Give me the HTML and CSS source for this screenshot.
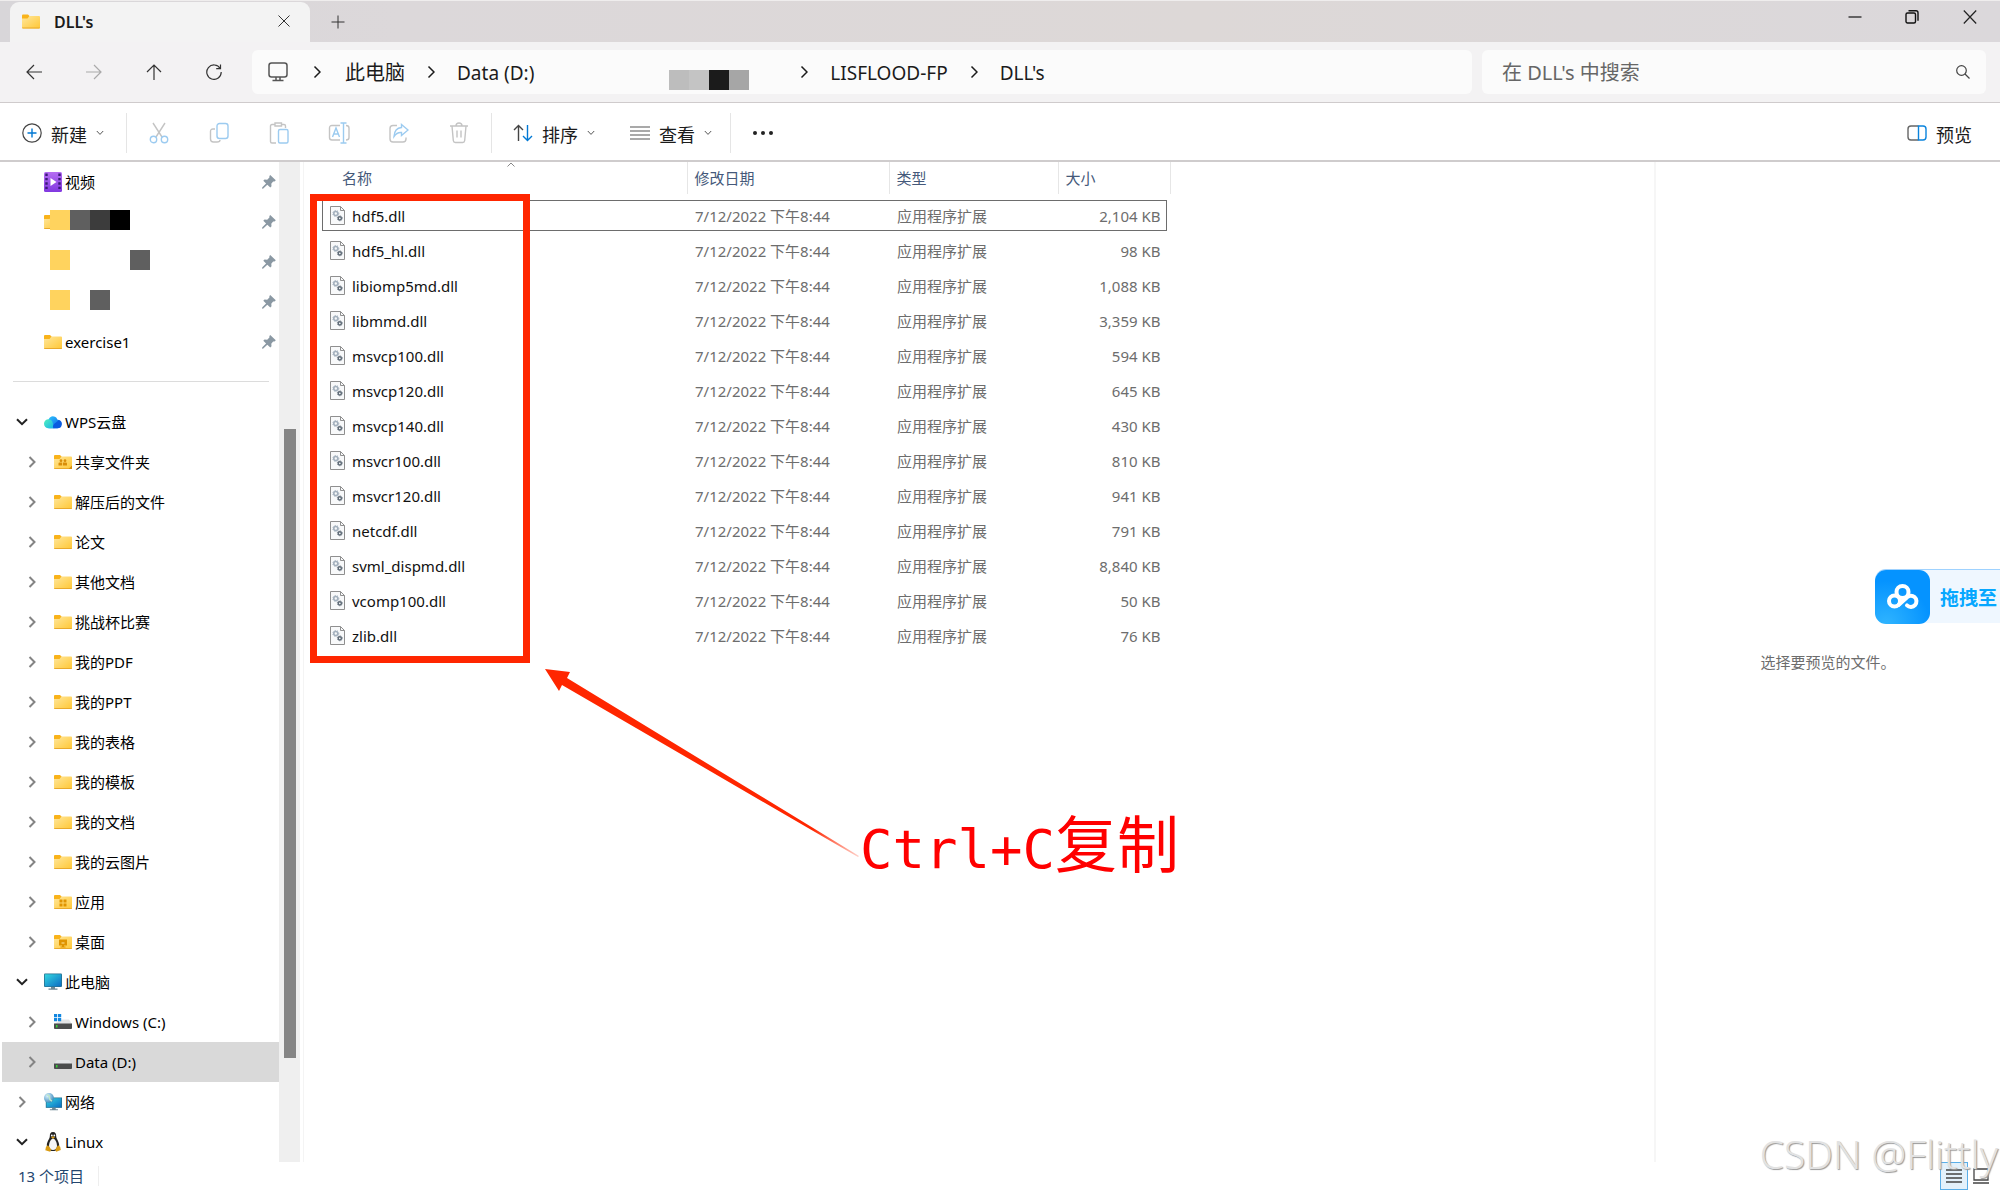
FILE: index.html
```html
<!DOCTYPE html>
<html lang="zh-CN">
<head>
<meta charset="utf-8">
<title>DLL's</title>
<link rel="stylesheet" href="styles.css">
</head>
<body>
<svg class="defs" aria-hidden="true">
  <defs>
    <linearGradient id="g-folder" x1="0" y1="0" x2="1" y2="1"><stop offset="0" stop-color="#ffe79c"/><stop offset="1" stop-color="#ffc735"/></linearGradient>
    <linearGradient id="g-screen" x1="0" y1="0" x2="1" y2="1"><stop offset="0" stop-color="#34d6e0"/><stop offset="1" stop-color="#0b6cc4"/></linearGradient>
    <linearGradient id="g-video" x1="0" y1="0" x2="0" y2="1"><stop offset="0" stop-color="#b56df2"/><stop offset="1" stop-color="#8138e0"/></linearGradient>
    <linearGradient id="g-cloud" x1="0" y1="0" x2="1" y2="1"><stop offset="0" stop-color="#2ec4ff"/><stop offset="1" stop-color="#0a5be0"/></linearGradient>
    <linearGradient id="g-mint" x1="0" y1="0" x2="1" y2="1"><stop offset="0" stop-color="#4ff0bd"/><stop offset="1" stop-color="#18b4ea"/></linearGradient>
    <radialGradient id="g-globe" cx=".35" cy=".3" r=".8"><stop offset="0" stop-color="#d8f2ff"/><stop offset="1" stop-color="#2d7fb4"/></radialGradient>
    <linearGradient id="g-arrow" gradientUnits="userSpaceOnUse" x1="0" y1="0" x2="314" y2="188"><stop offset=".85" stop-color="#ff2600"/><stop offset="1" stop-color="#ff2600" stop-opacity=".2"/></linearGradient>
  </defs>
  <symbol id="folder" viewBox="0 0 18 15"><path d="M0 1.5Q0 .5 1 .5h5l1.500 1.500V5H0z" fill="#f9b31a"/><path d="M0 4.500h5.500L7.500 2H17q1 0 1 1v10.500q0 1-1 1H1q-1 0-1-1z" fill="url(#g-folder)"/><path d="M0 13.500h18q0 1-1 1H1q-1 0-1-1z" fill="#e9a92c"/></symbol>
  <symbol id="folder-share" viewBox="0 0 18 15"><use href="#folder"/><g fill="#d98e0a"><circle cx="7" cy="6.200" r="1.400"/><circle cx="11" cy="6.200" r="1.400"/><path d="M4.500 11V9q0-1 1-1h2.700v3zM9 11V8h3q1 0 1 1v2zM18 11v3.500h-3.500z"/></g></symbol>
  <symbol id="folder-apps" viewBox="0 0 18 15"><use href="#folder"/><path d="M5.500 5h3v3h-3zM9.500 5h3v3h-3zM5.500 9h3v3h-3zM9.500 9h3v3h-3z" fill="#e09400"/></symbol>
  <symbol id="folder-desk" viewBox="0 0 18 15"><use href="#folder"/><path d="M5 5h8v6h-3v1h1.500v1h-5v-1H8v-1H5z" fill="#e09400"/><path d="M7.500 8.500h3" stroke="#ffe79c"/></symbol>
  <symbol id="video" viewBox="0 0 18 20"><rect width="18" height="20" rx="1.500" fill="url(#g-video)"/><path d="M2.500 1.500v17M15.500 1.500v17" stroke="#3b1a78" stroke-width="2.400" stroke-dasharray="2.400 2"/><path d="M6.500 6l6 4-6 4z" fill="#fff"/></symbol>
  <symbol id="cloud" viewBox="0 0 20 15"><path d="M5 8a5 5 0 0 1 9.800-3.200A5 5 0 0 1 15 14.500H5z" fill="url(#g-cloud)"/><path d="M5 4.500a5 5 0 0 1 4 2l2.500 8H5a5 5 0 0 1 0-10z" fill="url(#g-mint)"/><path d="M10.500 14.500q-1.500-3 1-5t5-4.200a4.700 4.700 0 0 1-1.500 9.200z" fill="#0a5be0"/></symbol>
  <symbol id="pc" viewBox="0 0 18 17"><rect width="18" height="13.500" rx="1" fill="#27708f"/><rect x=".8" y=".8" width="16.400" height="12" fill="url(#g-screen)"/><path d="M7 13.500h4V15H7zM4.500 15h9v1.200h-9z" fill="#6d8794"/></symbol>
  <symbol id="drive" viewBox="0 0 18 16"><path d="M3 6h12l3 4H0z" fill="#e3e5e7"/><path d="M0 9.500h18v4.700q0 .8-1 .8H1q-1 0-1-.8z" fill="#4b4d4e"/><rect x="2" y="11" width="1.500" height="2.500" fill="#36d236"/></symbol>
  <symbol id="drive-win" viewBox="0 0 18 16"><path d="M8 5.500h7l3 4.500H0z" fill="#e3e5e7"/><path d="M0 9.500h18v4.700q0 .8-1 .8H1q-1 0-1-.8z" fill="#4b4d4e"/><rect x="2" y="11" width="1.500" height="2.500" fill="#36d236"/><path d="M0 0h3.200v3.200H0zM4 0h3.200v3.200H4zM0 4h3.200v3.200H0zM4 4h3.200v3.200H4z" fill="#1287e0"/></symbol>
  <symbol id="network" viewBox="0 0 20 20"><path d="M2 5h18v11.500H2z" fill="#27708f"/><path d="M2.800 5.800h16.400v10H2.800z" fill="url(#g-screen)"/><path d="M9 16.500h4V18H9zM6.500 18h9v1.200h-9z" fill="#6d8794"/><circle cx="5.500" cy="5.500" r="5.500" fill="url(#g-globe)"/><path d="M3 2q3 0 3 3t3 4" stroke="#bfe6c8" stroke-width="1.500" fill="none"/></symbol>
  <symbol id="tux" viewBox="0 0 16 20"><path d="M8 0c2.500 0 3.200 2 3.200 4.200 0 2.800 3 5 3 9.300 0 3.500-3 5.500-6.200 5.500s-6.200-2-6.200-5.500c0-4.300 3-6.500 3-9.300C4.800 2 5.500 0 8 0z" fill="#222"/><path d="M8 6.500c2 0 4 4 4 7.500 0 2.500-2 4-4 4s-4-1.500-4-4c0-3.500 2-7.500 4-7.500z" fill="#f5f5f5"/><circle cx="6.800" cy="3.500" r=".9" fill="#fff"/><circle cx="9.300" cy="3.500" r=".9" fill="#fff"/><path d="M6 5.200l2-1 2 1-2 1.600zM3 13.200l3.200 4.300-1 2.200-4.900-1.500.7-3.500zM13 13.200l2.200 1.500.6 3.200-4.600 1.800-1-2z" fill="#d99b13"/></symbol>
  <symbol id="pin" viewBox="0 0 14 14"><path d="M8.200 0l5.600 5.200-1.300 1.200h-1.400L9.300 8.700l.2 2.600-1.200 1.100-3-2.700L1 13.800l-1-.3.300-1.200 3.800-3.700L1.300 5.800l1.200-1.200 2.700.2 2.200-2.200V.9z" fill="#8a98a3"/></symbol>
  <symbol id="right" viewBox="0 0 8 12"><path d="M1.500 1l5 5-5 5" fill="none" stroke="currentColor" stroke-width="2"/></symbol>
  <symbol id="down" viewBox="0 0 12 8"><path d="M1 1.200l5 5 5-5" fill="none" stroke="currentColor" stroke-width="2"/></symbol>
  <symbol id="crumb" viewBox="0 0 8 14"><path d="M1.500 1.500L7 7l-5.500 5.500" fill="none" stroke="currentColor" stroke-width="1.500"/></symbol>
  <symbol id="caret" viewBox="0 0 8 6"><path d="M.8 1L4 4.400 7.200 1" fill="none" stroke="currentColor"/></symbol>
  <symbol id="dll" viewBox="0 0 15 19"><path d="M.5.500h10l4 4v14H.5z" fill="#f8f9fa" stroke="#8f8f8f"/><path d="M10.500.500v4h4" fill="none" stroke="#8f8f8f"/><circle cx="5.800" cy="7.500" r="2" fill="none" stroke="#a3b0bd" stroke-width="1.600"/><circle cx="5.800" cy="7.500" r="3" fill="none" stroke="#a3b0bd" stroke-dasharray="1.200 1.300"/><circle cx="9.800" cy="12.300" r="1.600" fill="none" stroke="#5f6b77" stroke-width="1.500"/><circle cx="9.800" cy="12.300" r="2.500" fill="none" stroke="#5f6b77" stroke-width=".8" stroke-dasharray="1 1"/></symbol>
</svg>

<header class="titlebar">
  <div class="tab">
    <svg class="tab-icon"><use href="#folder"/></svg>
    <span class="tab-title">DLL's</span>
    <button class="tab-close" aria-label="关闭标签页"><svg width="12" height="12" viewBox="0 0 12 12"><path d="M.5.500l11 11M11.500.500l-11 11" stroke="#333"/></svg></button>
  </div>
  <button class="tab-add" aria-label="新建标签页"><svg width="14" height="14" viewBox="0 0 14 14"><path d="M7 .5v13M.5 7h13" stroke="#333"/></svg></button>
  <div class="window-buttons">
    <button aria-label="最小化"><svg width="14" height="14" viewBox="0 0 14 14"><path d="M.5 7h13" stroke="#222" stroke-width="1.300"/></svg></button>
    <button aria-label="还原"><svg width="14" height="14" viewBox="0 0 14 14" fill="none" stroke="#111" stroke-width="1.400"><rect x="1" y="3" width="9.500" height="10" rx="1.500"/><path d="M3.500.800H11q2 0 2 2v8"/></svg></button>
    <button aria-label="关闭"><svg width="14" height="14" viewBox="0 0 14 14"><path d="M.8.500l12.400 13M13.200.500L.8 13.500" stroke="#222" stroke-width="1.200"/></svg></button>
  </div>
</header>

<div class="navbar">
  <div class="nav-buttons">
    <button aria-label="后退"><svg width="16" height="16" viewBox="0 0 16 16"><path d="M16 8H1M8 1L1 8l7 7"/></svg></button>
    <button aria-label="前进" disabled><svg width="16" height="16" viewBox="0 0 16 16"><path d="M0 8h15M8 1l7 7-7 7"/></svg></button>
    <button aria-label="向上"><svg width="16" height="16" viewBox="0 0 16 16"><path d="M8 16V1M1 8l7-7 7 7"/></svg></button>
    <button aria-label="刷新"><svg width="16" height="16" viewBox="0 0 16 16"><path d="M14.200 4.500A7.200 7.200 0 1 0 15.200 8M14.500.500v4.200h-4.300"/></svg></button>
  </div>
  <nav class="address" aria-label="地址">
    <svg class="monitor" viewBox="0 0 20 20" fill="none" stroke="#555" stroke-width="1.500"><rect x="1" y="1" width="18" height="14" rx="2.500"/><path d="M8 15v3M12 15v3M4.500 18.500h11"/></svg>
    <svg class="crumb"><use href="#crumb"/></svg>
    <a class="cn" href="#">此电脑</a>
    <svg class="crumb"><use href="#crumb"/></svg>
    <a href="#">Data (D:)</a>
    <div class="mosaic"><i class="m1"></i><i class="m2"></i><i class="m3"></i><i class="m4"></i></div>
    <svg class="crumb"><use href="#crumb"/></svg>
    <a href="#">LISFLOOD-FP</a>
    <svg class="crumb"><use href="#crumb"/></svg>
    <a href="#">DLL's</a>
  </nav>
  <label class="search">
    <input type="text" placeholder="在 DLL's 中搜索" aria-label="搜索">
    <svg width="14" height="14" viewBox="0 0 14 14" fill="none" stroke="#444" stroke-width="1.200"><circle cx="5.500" cy="5.500" r="4.800"/><path d="M9 9l4.500 4.500"/></svg>
  </label>
</div>

<div class="toolbar">
  <button class="cmd cmd-new"><svg width="20" height="20" viewBox="0 0 20 20" fill="none"><circle cx="10" cy="10" r="9.200" stroke="#444" stroke-width="1.200"/><path d="M10 5.500v9M5.500 10h9" stroke="#0078d4" stroke-width="1.400"/></svg><span>新建</span><svg class="caret"><use href="#caret"/></svg></button>
  <span class="sep"></span>
  <button class="icon-btn" aria-label="剪切"><svg width="20" height="22" viewBox="0 0 20 22" fill="none" stroke-width="1.400"><path d="M4 1l9 14M16 1L7 15" stroke="#c4c4c4"/><g stroke="#9ccbf0"><circle cx="4.500" cy="17.500" r="3.200"/><circle cx="15.500" cy="17.500" r="3.200"/></g></svg></button>
  <button class="icon-btn" aria-label="复制"><svg width="20" height="22" viewBox="0 0 20 22" fill="none" stroke-width="1.400"><path d="M6 7H4Q1.500 7 1.500 9.500V17q0 3 3 3H8q3 0 3-2" stroke="#c4c4c4"/><rect x="8" y="1.500" width="11" height="15" rx="2.500" stroke="#9ccbf0"/></svg></button>
  <button class="icon-btn" aria-label="粘贴"><svg width="20" height="22" viewBox="0 0 20 22" fill="none" stroke-width="1.400"><path d="M6 2.500H3q-1.500 0-1.500 1.500v15.500q0 1.500 1.500 1.500h4M13 2.500h2q1.500 0 1.500 1.500v2M6 1h6.500v3H6z" stroke="#c4c4c4"/><rect x="9.500" y="7.500" width="9.500" height="13.500" rx="1.500" stroke="#9ccbf0"/></svg></button>
  <button class="icon-btn" aria-label="重命名"><svg width="22" height="22" viewBox="0 0 22 22" fill="none" stroke-width="1.400"><path d="M12 3.500H4Q1.500 3.500 1.500 6v9.500Q1.500 18 4 18h8M18 3.500q3 0 3 2.500v9.500q0 2.500-3 2.500" stroke="#c4c4c4"/><path d="M15.500 1v20M12.500 1h6M12.500 21h6M4.500 15l3.500-9 3.500 9M5.700 12h4.700" stroke="#9ccbf0"/></svg></button>
  <button class="icon-btn" aria-label="共享"><svg width="20" height="22" viewBox="0 0 20 22" fill="none" stroke-width="1.400"><path d="M8 3.500H4Q1 3.500 1 6.500V17q0 3 3 3h10q3 0 3-3v-1.500" stroke="#c4c4c4"/><path d="M12.500 2.500L19 8l-6.500 5.500V10.500Q8 10 5 14.500 5.500 6 12.500 5.500z" stroke="#9ccbf0"/></svg></button>
  <button class="icon-btn" aria-label="删除"><svg width="20" height="22" viewBox="0 0 20 22" fill="none" stroke="#c4c4c4" stroke-width="1.400"><path d="M1 4h18M7 4q0-3 3-3t3 3M3 4l1.300 14.500q.2 2 2 2h7.400q1.800 0 2-2L17 4M8 8.500v7M12 8.500v7"/></svg></button>
  <span class="sep"></span>
  <button class="cmd"><svg width="20" height="18" viewBox="0 0 20 18" fill="none" stroke-width="1.400"><path d="M5.500 17V1.500M1 6l4.500-4.500L10 6" stroke="#444"/><path d="M14.500 1v15.500M10 12l4.500 4.500L19 12" stroke="#0078d4"/></svg><span>排序</span><svg class="caret"><use href="#caret"/></svg></button>
  <button class="cmd"><svg width="20" height="14" viewBox="0 0 20 14"><path d="M0 1h20M0 5h20M0 9h20M0 13h20" stroke="#555" stroke-width="1.200"/></svg><span>查看</span><svg class="caret"><use href="#caret"/></svg></button>
  <span class="sep"></span>
  <button class="icon-btn" aria-label="更多"><svg width="20" height="4" viewBox="0 0 20 4" fill="#222"><circle cx="2" cy="2" r="2"/><circle cx="10" cy="2" r="2"/><circle cx="18" cy="2" r="2"/></svg></button>
  <button class="cmd cmd-preview"><svg width="20" height="16" viewBox="0 0 20 16" fill="none" stroke-width="1.400"><path d="M11.500 1H4Q1 1 1 4v8q0 3 3 3h7.500" stroke="#666"/><path d="M11.500 1H16q3 0 3 3v8q0 3-3 3h-4.500z" stroke="#0b84dd"/></svg><span>预览</span></button>
</div>

<main class="main">
  <nav class="sidebar" aria-label="导航窗格">
    <ul class="tree">
      <li><a href="#"><svg class="ico tall"><use href="#video"/></svg>视频<svg class="pin"><use href="#pin"/></svg></a></li>
      <li><a href="#" aria-label="固定项"><svg class="ico"><use href="#folder"/></svg><span class="mosaic over"><i class="y"></i><i class="d"></i><i class="dd"></i><i class="k"></i></span><svg class="pin"><use href="#pin"/></svg></a></li>
      <li><a href="#" aria-label="固定项"><span class="mosaic"><i class="y"></i><i></i><i></i><i></i><i class="d"></i></span><svg class="pin"><use href="#pin"/></svg></a></li>
      <li><a href="#" aria-label="固定项"><span class="mosaic"><i class="y"></i><i></i><i class="d"></i></span><svg class="pin"><use href="#pin"/></svg></a></li>
      <li><a href="#"><svg class="ico"><use href="#folder"/></svg>exercise1<svg class="pin"><use href="#pin"/></svg></a></li>
      <li class="rule"></li>
      <li><a href="#"><svg class="down"><use href="#down"/></svg><svg class="ico"><use href="#cloud"/></svg>WPS云盘</a></li>
      <li class="sub"><a href="#"><svg class="right"><use href="#right"/></svg><svg class="ico"><use href="#folder-share"/></svg>共享文件夹</a></li>
      <li class="sub"><a href="#"><svg class="right"><use href="#right"/></svg><svg class="ico"><use href="#folder"/></svg>解压后的文件</a></li>
      <li class="sub"><a href="#"><svg class="right"><use href="#right"/></svg><svg class="ico"><use href="#folder"/></svg>论文</a></li>
      <li class="sub"><a href="#"><svg class="right"><use href="#right"/></svg><svg class="ico"><use href="#folder"/></svg>其他文档</a></li>
      <li class="sub"><a href="#"><svg class="right"><use href="#right"/></svg><svg class="ico"><use href="#folder"/></svg>挑战杯比赛</a></li>
      <li class="sub"><a href="#"><svg class="right"><use href="#right"/></svg><svg class="ico"><use href="#folder"/></svg>我的PDF</a></li>
      <li class="sub"><a href="#"><svg class="right"><use href="#right"/></svg><svg class="ico"><use href="#folder"/></svg>我的PPT</a></li>
      <li class="sub"><a href="#"><svg class="right"><use href="#right"/></svg><svg class="ico"><use href="#folder"/></svg>我的表格</a></li>
      <li class="sub"><a href="#"><svg class="right"><use href="#right"/></svg><svg class="ico"><use href="#folder"/></svg>我的模板</a></li>
      <li class="sub"><a href="#"><svg class="right"><use href="#right"/></svg><svg class="ico"><use href="#folder"/></svg>我的文档</a></li>
      <li class="sub"><a href="#"><svg class="right"><use href="#right"/></svg><svg class="ico"><use href="#folder"/></svg>我的云图片</a></li>
      <li class="sub"><a href="#"><svg class="right"><use href="#right"/></svg><svg class="ico"><use href="#folder-apps"/></svg>应用</a></li>
      <li class="sub"><a href="#"><svg class="right"><use href="#right"/></svg><svg class="ico"><use href="#folder-desk"/></svg>桌面</a></li>
      <li><a href="#"><svg class="down"><use href="#down"/></svg><svg class="ico"><use href="#pc"/></svg>此电脑</a></li>
      <li class="sub"><a href="#"><svg class="right"><use href="#right"/></svg><svg class="ico"><use href="#drive-win"/></svg>Windows (C:)</a></li>
      <li class="sub selected"><a href="#"><svg class="right"><use href="#right"/></svg><svg class="ico"><use href="#drive"/></svg>Data (D:)</a></li>
      <li><a href="#"><svg class="right"><use href="#right"/></svg><svg class="ico tall"><use href="#network"/></svg>网络</a></li>
      <li><a href="#"><svg class="down"><use href="#down"/></svg><svg class="ico tall"><use href="#tux"/></svg>Linux</a></li>
    </ul>
    <div class="scrollbar"><div class="thumb"></div></div>
  </nav>

  <section class="files">
    <svg class="sort-mark" viewBox="0 0 8 6"><path d="M.5 4.500L4 1l3.500 3.500" fill="none" stroke="#888"/></svg>
    <table>
      <colgroup><col class="c-name"><col class="c-date"><col class="c-type"><col class="c-size"></colgroup>
      <thead><tr><th>名称</th><th>修改日期</th><th>类型</th><th>大小</th></tr></thead>
      <tbody>
        <tr class="focused"><td><div><svg class="dll"><use href="#dll"/></svg>hdf5.dll</div></td><td><div>7/12/2022 下午8:44</div></td><td><div>应用程序扩展</div></td><td><div>2,104 KB</div></td></tr>
        <tr><td><div><svg class="dll"><use href="#dll"/></svg>hdf5_hl.dll</div></td><td><div>7/12/2022 下午8:44</div></td><td><div>应用程序扩展</div></td><td><div>98 KB</div></td></tr>
        <tr><td><div><svg class="dll"><use href="#dll"/></svg>libiomp5md.dll</div></td><td><div>7/12/2022 下午8:44</div></td><td><div>应用程序扩展</div></td><td><div>1,088 KB</div></td></tr>
        <tr><td><div><svg class="dll"><use href="#dll"/></svg>libmmd.dll</div></td><td><div>7/12/2022 下午8:44</div></td><td><div>应用程序扩展</div></td><td><div>3,359 KB</div></td></tr>
        <tr><td><div><svg class="dll"><use href="#dll"/></svg>msvcp100.dll</div></td><td><div>7/12/2022 下午8:44</div></td><td><div>应用程序扩展</div></td><td><div>594 KB</div></td></tr>
        <tr><td><div><svg class="dll"><use href="#dll"/></svg>msvcp120.dll</div></td><td><div>7/12/2022 下午8:44</div></td><td><div>应用程序扩展</div></td><td><div>645 KB</div></td></tr>
        <tr><td><div><svg class="dll"><use href="#dll"/></svg>msvcp140.dll</div></td><td><div>7/12/2022 下午8:44</div></td><td><div>应用程序扩展</div></td><td><div>430 KB</div></td></tr>
        <tr><td><div><svg class="dll"><use href="#dll"/></svg>msvcr100.dll</div></td><td><div>7/12/2022 下午8:44</div></td><td><div>应用程序扩展</div></td><td><div>810 KB</div></td></tr>
        <tr><td><div><svg class="dll"><use href="#dll"/></svg>msvcr120.dll</div></td><td><div>7/12/2022 下午8:44</div></td><td><div>应用程序扩展</div></td><td><div>941 KB</div></td></tr>
        <tr><td><div><svg class="dll"><use href="#dll"/></svg>netcdf.dll</div></td><td><div>7/12/2022 下午8:44</div></td><td><div>应用程序扩展</div></td><td><div>791 KB</div></td></tr>
        <tr><td><div><svg class="dll"><use href="#dll"/></svg>svml_dispmd.dll</div></td><td><div>7/12/2022 下午8:44</div></td><td><div>应用程序扩展</div></td><td><div>8,840 KB</div></td></tr>
        <tr><td><div><svg class="dll"><use href="#dll"/></svg>vcomp100.dll</div></td><td><div>7/12/2022 下午8:44</div></td><td><div>应用程序扩展</div></td><td><div>50 KB</div></td></tr>
        <tr><td><div><svg class="dll"><use href="#dll"/></svg>zlib.dll</div></td><td><div>7/12/2022 下午8:44</div></td><td><div>应用程序扩展</div></td><td><div>76 KB</div></td></tr>
      </tbody>
    </table>
    <div class="mark-box"></div>
    <svg class="mark-arrow" viewBox="0 0 316 190"><path d="M0 0l25 3-3 6L314 187l-1 1L17 16l-3 6z" fill="url(#g-arrow)"/></svg>
    <p class="mark-text"><span>Ctrl+C</span>复制</p>
  </section>

  <aside class="preview">
    <p>选择要预览的文件。</p>
    <button class="upload">
      <svg width="55" height="54" viewBox="0 0 55 54"><defs><radialGradient id="g-up" cx=".2" cy="1" r=".8"><stop offset="0" stop-color="#2fb4ff"/><stop offset="1" stop-color="#0593ff"/></radialGradient></defs><rect width="55" height="54" rx="11" fill="url(#g-up)"/><g fill="none" stroke="#fff" stroke-width="4" stroke-linecap="round"><circle cx="27.500" cy="22" r="6"/><circle cx="19.500" cy="31" r="5.500"/><path d="M23.500 35l8-7.200a5.600 5.600 0 1 1 .5 7.600"/></g></svg>
      <span>拖拽至</span>
    </button>
  </aside>
</main>

<footer class="status">
  <span class="count">13 个项目</span>
  <div class="views">
    <button class="on" aria-label="详细信息"><svg width="16" height="14" viewBox="0 0 16 14"><path d="M0 1h16M0 5h16M0 9h16M0 13h16" stroke="#444" stroke-width="1.300"/></svg></button>
    <button aria-label="大图标"><svg width="16" height="16" viewBox="0 0 16 16" fill="none" stroke="#444" stroke-width="1.300"><path d="M1 1h14v11H1zM0 15h16"/></svg></button>
  </div>
</footer>
<div class="watermark">CSDN @Flittly</div>
</body>
</html>
```
FILE: styles.css
```css
* { box-sizing: border-box; }
body {
  margin: 0;
  min-height: 100vh;
  display: flex;
  flex-direction: column;
  position: relative;
  overflow-x: hidden;
  background: #fff;
  color: #1b1b1b;
  font: 15px/20px "Noto Sans", "Noto Sans CJK SC", sans-serif;
}
button, input { font: inherit; color: inherit; border: 0; background: none; padding: 0; margin: 0; }
button { display: flex; align-items: center; justify-content: center; }
a { color: inherit; text-decoration: none; }
svg { flex: none; display: block; }
.defs { position: absolute; width: 0; height: 0; }

/* title bar */
.titlebar {
  display: flex;
  height: 42px;
  padding: 1px 0 0 10px;
  background: linear-gradient(90deg, #d8d6d9, #dcd8da 20%, #ddd8d7 60%, #dbd8db);
  border-top: 1px solid #efeded;
}
.tab {
  display: flex;
  align-items: center;
  width: 300px;
  padding: 0 20px 2px 12px;
  background: #f3f3f3;
  border-radius: 9px 9px 0 0;
}
.tab-icon { width: 18px; height: 15px; }
.tab-title { flex: 1; margin-left: 14px; padding-top: 2px; font-size: 16px; font-weight: 600; }
.tab-add { width: 56px; }
.window-buttons { display: flex; margin-left: auto; height: 30px; }
.window-buttons button { width: 57px; }
.window-buttons button:last-child { width: 60px; }

/* navigation row */
.navbar {
  display: flex;
  gap: 10px;
  height: 61px;
  padding: 8px 14px 8px 4px;
  background: #f3f2f3;
  border-bottom: 1px solid #cfcbcc;
}
.nav-buttons { display: flex; width: 238px; }
.nav-buttons button { flex: none; width: 60px; }
.nav-buttons svg { fill: none; stroke: #333; stroke-width: 1.2; }
.nav-buttons button:disabled svg { stroke: #aaa; }
.address {
  flex: 1;
  display: flex;
  align-items: center;
  gap: 22px;
  padding: 0 16px;
  background: #fbfbfb;
  border-radius: 6px;
  font-size: 19px;
}
.address a { padding-top: 2px; }
.address .cn { margin-left: 2px; font-size: 20px; }
.monitor { width: 20px; height: 20px; margin-right: 3px; }
.crumb { width: 8px; height: 14px; }
.mosaic { display: flex; }
.mosaic i { width: 20px; height: 20px; }
.address .mosaic { margin: 16px 29px 0 113px; }
.m1 { background: #bdbdbd; } .m2 { background: #c4c4c4; } .m3 { background: #1b1b1b; } .m4 { background: #a6a6a6; }
.search {
  display: flex;
  align-items: center;
  width: 504px;
  padding: 0 16px 0 20px;
  background: #fbfbfb;
  border-radius: 6px;
}
.search input { flex: 1; min-width: 0; font-size: 20px; outline: 0; }
.search input::placeholder { color: #666; opacity: 1; }

/* command bar */
.toolbar {
  display: flex;
  align-items: center;
  height: 59px;
  padding-top: 2px;
  border-bottom: 2px solid #cfcccd;
}
.cmd { width: 117px; height: 40px; gap: 9px; justify-content: flex-start; padding-left: 19px; font-size: 18px; }
.cmd span { padding-top: 5px; }
.cmd-new { width: 124px; padding-left: 22px; }
.cmd-preview { width: 93px; margin-left: auto; padding-left: 0; }
.caret { width: 8px; height: 6px; color: #555; }
.sep { width: 1px; height: 40px; margin: 0 2px; background: #e5e5e5; }
.icon-btn { width: 60px; height: 40px; }

/* main area */
.main { flex: 1; display: flex; }
.sidebar { display: flex; width: 304px; border-right: 1px solid #f4f4f4; }
.tree { flex: 1; margin: 0; padding: 0; list-style: none; color: #000; }
.tree li { height: 40px; padding: 0 7px 0 16px; }
.tree .sub { padding-left: 26px; }
.tree a { display: flex; align-items: center; height: 40px; padding-left: 28px; }
.tree .down { width: 12px; height: 8px; margin: 0 16px 0 -28px; color: #222; }
.tree .right { width: 8px; height: 12px; margin: 0 18px 0 -26px; color: #848484; }
.ico { width: 18px; height: 18px; margin-right: 3px; }
.ico.tall { height: 20px; }
.pin { width: 14px; height: 14px; margin-left: auto; margin-right: -4px; }
.tree .mosaic { margin: 0 0 4px 6px; }
.tree .over { margin-left: -15px; }
.y { background: #ffd35e; } .d { background: #5f5f5f; } .dd { background: #3c3c3c; } .k { background: #000; }
.tree .rule { padding: 19px 10px 0 13px; }
.rule::before { content: ""; display: block; height: 1px; background: #dcdcdc; }
.tree .selected { margin-left: 2px; padding-left: 24px; background: #d9d9d9; }
.scrollbar { width: 21px; margin-right: 3px; padding: 267px 4px 0 5px; background: #efefef; }
.thumb { height: 629px; background: #858585; }

.files { position: relative; flex: 1; padding-left: 18px; }
table { width: 849px; table-layout: fixed; border-collapse: collapse; }
.c-name { width: 365px; }
.c-date { width: 202px; }
.c-type { width: 169px; }
th {
  height: 32px;
  padding: 0 0 0 7px;
  border-right: 1px solid #e6e6e6;
  text-align: left;
  font-weight: 400;
  color: #45597a;
}
th:first-child { padding-left: 20px; }
tbody::before { content: ""; display: block; height: 4px; }
td { height: 35px; padding: 0; color: #6d6d6d; }
td div { display: flex; align-items: center; height: 31px; padding-left: 8px; border: 0 solid #6d6d6d; }
td:first-child div { gap: 7px; padding-left: 8px; color: #111; }
td:last-child div { justify-content: flex-end; margin-right: 4px; padding-right: 6px; }
.focused div { border-width: 1px 0; }
.focused td:first-child div { border-left-width: 1px; padding-left: 7px; }
.focused td:last-child div { border-right-width: 1px; padding-right: 5px; }
.dll { width: 15px; height: 19px; }
.sort-mark { position: absolute; left: 202px; top: 0; width: 10px; height: 6px; }

/* annotations over the file list */
.mark-box { position: absolute; left: 6px; top: 32px; width: 220px; height: 469px; border: 7px solid #ff2600; }
.mark-arrow { position: absolute; left: 241px; top: 507px; width: 316px; height: 190px; }
.mark-text {
  position: absolute;
  left: 556px;
  top: 641px;
  margin: 0;
  white-space: nowrap;
  color: #f00;
  font: 400 62px/76px "Noto Sans CJK SC", sans-serif;
}
.mark-text span { font: 54px/76px "DejaVu Sans Mono", monospace; }

.preview {
  position: relative;
  display: flex;
  justify-content: center;
  align-items: center;
  width: 346px;
  border-left: 2px solid #f6f6f6;
  color: #6d6d6d;
}
.preview p { margin: 0; }
.upload {
  position: absolute;
  right: 0;
  top: 407px;
  gap: 10px;
  height: 54px;
  background: #eff7ff;
  border-top: 1px solid #9fd2ff;
  border-radius: 11px 0 0 11px;
  color: #06a7ff;
  font-size: 19px;
  font-weight: 700;
}
.upload span { padding: 2px 3px 0 0; }

/* status bar */
.status { display: flex; align-items: center; height: 28px; color: #24466f; }
.count { padding: 0 14px 0 18px; border-right: 1px solid #eee; }
.views { display: flex; margin-left: auto; padding-right: 6px; }
.views button { width: 26px; height: 28px; }
.views .on { width: 28px; background: #e3f1fb; border: 1px solid #5aaee8; }
.watermark {
  position: absolute;
  right: 2px;
  bottom: 12px;
  color: #e2e2e2;
  font: 300 39px/48px "Noto Sans", sans-serif;
  text-shadow: 1px 1px 1px #999;
  pointer-events: none;
}
```
